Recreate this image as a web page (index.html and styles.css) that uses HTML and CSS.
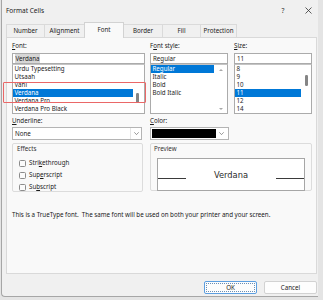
FILE: index.html
```html
<!DOCTYPE html>
<html>
<head>
<meta charset="utf-8">
<link rel="stylesheet" href="styles.css">
</head>
<body>
<div class="dialog">
  <div class="titlebar">
    <span class="title">Format Cells</span>
    <span class="help">?</span>
    <svg class="close" width="7" height="7" viewBox="0 0 7 7"><path d="M0.5 0.5 L6.5 6.5 M6.5 0.5 L0.5 6.5" stroke="#333" stroke-width="0.8" fill="none"/></svg>
  </div>
  <div class="tabs">
    <div class="tab t-number">Number</div>
    <div class="tab t-align">Alignment</div>
    <div class="tab t-font active">Font</div>
    <div class="tab t-border">Border</div>
    <div class="tab t-fill">Fill</div>
    <div class="tab t-prot">Protection</div>
  </div>
  <div class="panel">
    <div class="fontrow">
      <div class="col col-font">
        <div class="label"><u>F</u>ont:</div>
        <div class="edit"><span class="sel">Verdana</span></div>
        <div class="list">
          <div class="items">
            <div class="item">Urdu Typesetting</div>
            <div class="item">Utsaah</div>
            <div class="item">Vani</div>
            <div class="item selected">Verdana</div>
            <div class="item">Verdana Pro</div>
            <div class="item">Verdana Pro Black</div>
          </div>
          <div class="scroll s-font"><div class="thumb"></div></div>
        </div>
      </div>
      <div class="col col-style">
        <div class="label">F<u>o</u>nt style:</div>
        <div class="edit">Regular</div>
        <div class="list">
          <div class="items">
            <div class="item selected">Regular</div>
            <div class="item">Italic</div>
            <div class="item">Bold</div>
            <div class="item">Bold Italic</div>
          </div>
          <div class="scroll s-style">
            <span class="arr up"></span>
            <span class="arr down"></span>
          </div>
        </div>
      </div>
      <div class="col col-size">
        <div class="label"><u>S</u>ize:</div>
        <div class="edit">11</div>
        <div class="list">
          <div class="items">
            <div class="item">8</div>
            <div class="item">9</div>
            <div class="item">10</div>
            <div class="item selected">11</div>
            <div class="item">12</div>
            <div class="item">14</div>
          </div>
          <div class="scroll s-size"><div class="thumb"></div></div>
        </div>
      </div>
    </div>
    <div class="droprow">
      <div class="col col-under">
        <div class="label"><u>U</u>nderline:</div>
        <div class="combo c-under">
          <span class="ctext">None</span>
          <span class="cbtn"><svg width="5" height="3" viewBox="0 0 5 3"><path d="M0.3 0.3 L2.5 2.6 L4.7 0.3" stroke="#555" stroke-width="0.6" fill="none"/></svg></span>
        </div>
      </div>
      <div class="col col-color">
        <div class="label"><u>C</u>olor:</div>
        <div class="combo c-color">
          <span class="swatch"></span>
          <span class="cbtn"><svg width="5" height="3" viewBox="0 0 5 3"><path d="M0.3 0.3 L2.5 2.6 L4.7 0.3" stroke="#555" stroke-width="0.6" fill="none"/></svg></span>
        </div>
      </div>
    </div>
    <div class="grouprow">
      <div class="group g-effects">
        <span class="gtitle">Effects</span>
        <div class="checks">
          <div class="check"><span class="box"></span>Stri<u>k</u>ethrough</div>
          <div class="check"><span class="box"></span>Sup<u>e</u>rscript</div>
          <div class="check"><span class="box"></span>Su<u>b</u>script</div>
        </div>
      </div>
      <div class="group g-preview">
        <span class="gtitle">Preview</span>
        <div class="pvbox">
          <span class="pvline"></span>
          <span class="pvtext">Verdana</span>
          <span class="pvline"></span>
        </div>
      </div>
    </div>
    <p class="info">This is a TrueType font.&nbsp; The same font will be used on both your printer and your screen.</p>
  </div>
  <div class="footer">
    <button class="btn ok"><span class="focus">OK</span></button>
    <button class="btn">Cancel</button>
  </div>
</div>
<div class="annot"></div>
</body>
</html>
```

FILE: styles.css
```css
html, body {
  margin: 0;
  padding: 0;
}
body {
  width: 323px;
  height: 300px;
  overflow: hidden;
  background: #e4e4e4;
  font-family: "Noto Sans", "Open Sans", sans-serif;
  font-size: 6.2px;
  color: #1a1a1a;
  position: relative;
}
u { text-decoration: underline; text-underline-offset: 1px; text-decoration-thickness: 0.5px; }

.dialog {
  margin-left: 1px;
  width: 316px;
  height: 296px;
  border-left: 1px solid #a6a6a6;
  border-bottom: 1px solid #a6a6a6;
  border-bottom-left-radius: 4px;
  background: #f0f0f0;
  display: flex;
  flex-direction: column;
}

.titlebar {
  height: 21px;
  display: flex;
  align-items: center;
  padding-left: 4px;
  padding-right: 6px;
  box-sizing: border-box;
}
.title { font-size: 6.5px; line-height: 8px; }
.help { margin-left: auto; width: 8px; text-align: center; font-size: 6.8px; color: #333; line-height: 8px; }
.close { margin-left: 18px; display: block; }

.tabs {
  height: 16px;
  display: flex;
  align-items: flex-end;
  padding-left: 4px;
}
.tab {
  box-sizing: border-box;
  height: 13px;
  border: 1px solid #dadada;
  border-bottom: none;
  margin-left: -1px;
  text-align: center;
  line-height: 8px;
  padding-top: 2px;
  background: #f0f0f0;
  color: #222;
}
.tab:first-child { margin-left: 0; }
.t-number { width: 39px; }
.t-align { width: 41px; }
.t-font { width: 40px; }
.t-border { width: 40px; }
.t-fill { width: 39px; }
.t-prot { width: 37px; }
.tab.active {
  height: 16px;
  margin-bottom: -1px;
  padding-top: 3px;
  background: #f9f9f9;
  border-color: #d2d2d2;
  position: relative;
  z-index: 1;
}

.panel {
  margin-left: 4px;
  margin-right: 1px;
  height: 237px;
  box-sizing: border-box;
  border: 1px solid #d9d9d9;
  background: #f9f9f9;
  padding: 4px 0 0 5px;
}

.label { line-height: 8px; height: 8px; white-space: nowrap; }

.fontrow { display: flex; }
.col { display: flex; flex-direction: column; }
.col-font { width: 133px; margin-right: 5px; }
.col-style { width: 78px; margin-right: 6px; }
.col-size { width: 78px; }

.edit {
  margin-top: 3px;
  box-sizing: border-box;
  height: 11px;
  border: 1px solid #ababab;
  background: #fff;
  padding-left: 2px;
  line-height: 9px;
  white-space: nowrap;
}
.sel { background: #d6d6d6; padding: 0 0.5px; }

.list {
  box-sizing: border-box;
  height: 50px;
  border: 1px solid #ababab;
  border-top-color: #c4c4c4;
  background: #fff;
  display: flex;
}
.items { flex: 1; }
.item {
  height: 8px;
  line-height: 8px;
  padding-left: 1.5px;
  white-space: nowrap;
  overflow: hidden;
}
.item.selected { background: #0078d7; color: #fff; }

.scroll { flex: none; box-sizing: border-box; }
.s-font { width: 11px; padding: 28px 0 0 3px; }
.s-size { width: 10px; padding: 10px 0 0 4px; }
.thumb { width: 2.5px; border-radius: 1.2px; background: #858585; }
.s-font .thumb { height: 10px; }
.s-size .thumb { height: 11px; }
.s-style {
  width: 13px;
  display: flex;
  flex-direction: column;
  align-items: center;
  justify-content: space-between;
  padding: 4px 0 3px;
}
.arr { width: 0; height: 0; border-left: 2px solid transparent; border-right: 2px solid transparent; }
.arr.up { border-bottom: 2.5px solid #a8a8a8; }
.arr.down { border-top: 2.5px solid #a8a8a8; }

.droprow { display: flex; margin-top: 3px; }
.col-under { width: 133px; margin-right: 5px; }
.col-color { width: 79px; }
.combo {
  margin-top: 2px;
  box-sizing: border-box;
  height: 13px;
  border: 1px solid #b4b4b4;
  background: #fff;
  display: flex;
  align-items: stretch;
}
.c-under { width: 130px; }
.c-color { width: 79px; padding: 1px; }
.ctext { flex: 1; line-height: 11px; padding-left: 2px; }
.cbtn { width: 10px; display: flex; align-items: center; justify-content: center; }
.c-under .cbtn { border-left: 1px solid #e6e6e6; }
.c-color .cbtn { flex: 1; }
.swatch { width: 64px; background: #000; }

.grouprow { display: flex; margin-top: 3px; }
.group {
  box-sizing: border-box;
  border: 1px solid #dcdcdc;
  border-radius: 2px;
}
.gtitle {
  display: inline-block;
  line-height: 8px;
  margin-top: -3px;
  padding: 0 1px;
  background: #f9f9f9;
  color: #333;
}
.g-effects { width: 131px; height: 49px; margin-right: 7px; }
.g-effects .gtitle { margin-left: 3px; }
.g-preview { width: 162px; height: 48px; }
.g-preview .gtitle { margin-left: 2px; }

.checks { padding: 4px 0 0 6px; }
.check { height: 12px; display: flex; align-items: center; line-height: 8px; }
.box {
  width: 7px;
  height: 7px;
  box-sizing: border-box;
  border: 1px solid #8c8c8c;
  border-radius: 1.5px;
  background: #fbfbfb;
  margin-right: 3px;
}

.pvbox {
  margin: 5px 0 0 6px;
  width: 148px;
  height: 33px;
  box-sizing: border-box;
  border: 1px solid #a6a6a6;
  background: #fff;
  display: grid;
  grid-template-columns: 28px 1fr 28px;
  padding-top: 10px;
}
.pvtext {
  font-family: "DejaVu Sans", Verdana, sans-serif;
  font-size: 8.3px;
  line-height: 12px;
  text-align: center;
  color: #2a2a2a;
}
.pvline { height: 1px; margin-top: 9px; background: #3a3a3a; }

.info { margin: 19px 0 0; line-height: 8px; white-space: nowrap; }

.footer {
  display: flex;
  justify-content: flex-end;
  gap: 7px;
  padding-top: 7px;
  padding-right: 1px;
}
.btn {
  width: 53px;
  height: 13px;
  box-sizing: border-box;
  border: 1px solid #d2d2d2;
  border-radius: 2px;
  background: #fdfdfd;
  font-family: inherit;
  font-size: 6.2px;
  color: #1a1a1a;
  padding: 0;
  line-height: 11px;
  display: flex;
  align-items: center;
  justify-content: center;
}
.btn.ok { border-color: #5c9ee0; padding: 1px; }
.focus {
  flex: 1;
  align-self: stretch;
  border: 1px dotted #6a8fb5;
  line-height: 7px;
  text-align: center;
}

.annot {
  position: absolute;
  left: 3px;
  top: 82px;
  width: 143px;
  height: 21px;
  box-sizing: border-box;
  border: 1.5px solid #ea6767;
  border-radius: 1px;
}
```
